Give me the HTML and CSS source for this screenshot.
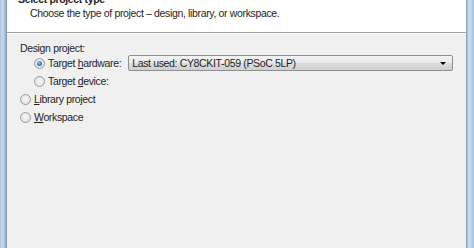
FILE: index.html
```html
<!DOCTYPE html>
<html lang="en">
<head>
  <meta charset="UTF-8" />
  <title>New Project</title>
  <link rel="stylesheet" href="styles.css">
</head>
<body>

  <div class="window">
    <div class="frame frame-left"></div>

    <div class="dialog">
      <div class="header">
        <div class="title">Select project type</div>
        <div class="subtitle">Choose the type of project – design, library, or workspace.</div>
      </div>

      <div class="panel">
        <div class="group-label">Design project:</div>

        <div class="sub-options">
          <div class="option">
            <span class="radio checked"></span>
            <span class="label">Target <u>h</u>ardware:</span>
            <div class="combo">
              <span class="combo-text">Last used: CY8CKIT-059 (PSoC 5LP)</span>
              <span class="combo-arrow"></span>
            </div>
          </div>
          <div class="option">
            <span class="radio"></span>
            <span class="label">Target <u>d</u>evice:</span>
          </div>
        </div>

        <div class="option">
          <span class="radio"></span>
          <span class="label"><u>L</u>ibrary project</span>
        </div>
        <div class="option">
          <span class="radio"></span>
          <span class="label"><u>W</u>orkspace</span>
        </div>
      </div>
    </div>

    <div class="frame frame-right"></div>
  </div>

</body>
</html>
```

FILE: styles.css
```css
* {
  margin: 0;
  padding: 0;
  box-sizing: border-box;
}

body {
  width: 474px;
  height: 248px;
  overflow: hidden;
  background: #f0f0f0;
  font-family: 'Liberation Sans', Arial, sans-serif;
  font-size: 10.5px;
  letter-spacing: -0.35px;
  color: #1e1e1e;
}

.window {
  display: flex;
  height: 248px;
}

.frame {
  flex: none;
  height: 100%;
}

.frame-left {
  width: 7px;
  background: linear-gradient(90deg, #a9c0dc 0, #c7d9ee 2px, #b7cde6 4px, #8fa9c8 6px, #6f8db4 7px);
}

.frame-right {
  width: 8px;
  background: linear-gradient(90deg, #6f8db4 0, #9fb8d6 1px, #cfe0f2 3px, #b9cee7 6px, #a3bbd8 8px);
}

.dialog {
  flex: 1;
  display: flex;
  flex-direction: column;
}

.header {
  height: 33px;
  background: #ffffff;
  border-bottom: 1px solid #a0a0a0;
  padding-left: 11px;
}

.title {
  font-weight: bold;
  margin-top: -8px;
  line-height: 14px;
}

.subtitle {
  padding-left: 12px;
  line-height: 14px;
}

.panel {
  flex: 1;
  padding: 8px 13px 0 13px;
  border-top: 1px solid #ffffff;
}

.group-label {
  line-height: 12px;
}

.sub-options {
  padding-left: 14px;
}

.option {
  display: flex;
  align-items: center;
  height: 18px;
}

.radio {
  flex: none;
  width: 11px;
  height: 11px;
  border-radius: 50%;
  border: 1px solid #9a9b9b;
  background: radial-gradient(circle at 50% 45%, #f6f6f6 0, #e6e6e6 60%, #d4d4d4 100%);
  margin-right: 3px;
  position: relative;
}

.radio.checked::after {
  content: '';
  position: absolute;
  left: 2px;
  top: 2px;
  width: 5px;
  height: 5px;
  border-radius: 50%;
  background: radial-gradient(circle at 40% 35%, #8ad0f5 0, #2a74b4 60%, #1b4f85 100%);
}

.label {
  white-space: nowrap;
}

.combo {
  flex: 1;
  display: flex;
  align-items: center;
  justify-content: space-between;
  height: 16px;
  margin-left: 7px;
  border: 1px solid #8f8f8f;
  border-radius: 2px;
  background: linear-gradient(#f3f3f3, #ebebeb 50%, #dddddd 51%, #d0d0d0);
  padding: 0 6px 0 3px;
}

.combo-arrow {
  width: 0;
  height: 0;
  border-left: 3px solid transparent;
  border-right: 3px solid transparent;
  border-top: 3px solid #000000;
}
```
